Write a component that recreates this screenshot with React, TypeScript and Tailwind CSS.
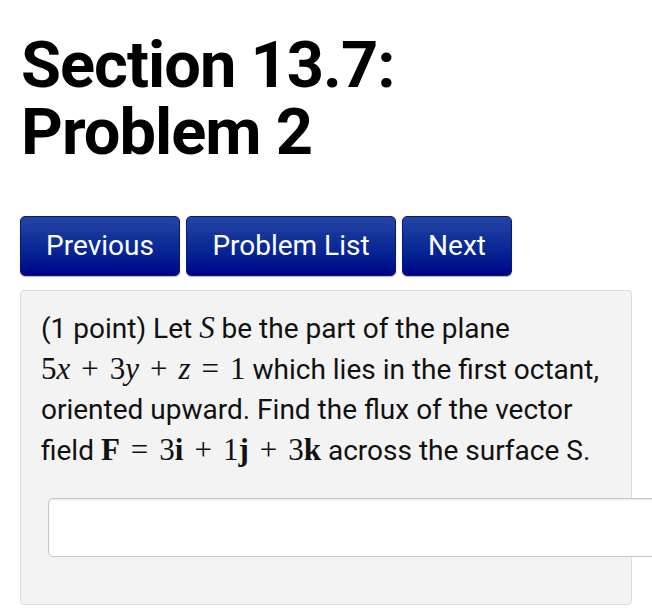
import React from 'react';

const btn =
  'h-[60px] rounded-[5px] border border-[#0b1a6b] bg-gradient-to-b from-[#2444a4] to-[#000088] text-white text-[28px] leading-none shadow-[0_1px_1px_rgba(0,0,0,0.3)]';

function M({ children }: { children: React.ReactNode }) {
  return <span className="font-['Liberation_Serif','DejaVu_Serif',serif] text-[31px]">{children}</span>;
}

function Op({ children }: { children: React.ReactNode }) {
  return <span className="mx-[11px]">{children}</span>;
}

export default function App() {
  return (
    <div className="min-h-[613px] bg-white font-['Roboto',sans-serif] text-black overflow-hidden">
      <h1 className="pl-[21px] pt-[32px] text-[65px] font-bold leading-[67px] tracking-[-1px]">
        Section 13.7:
        <br />
        Problem 2
      </h1>

      <div className="flex gap-[6px] pl-[20px] mt-[50px]">
        <button className={`${btn} w-[160px]`}>Previous</button>
        <button className={`${btn} w-[210px]`}>Problem List</button>
        <button className={`${btn} w-[110px]`}>Next</button>
      </div>

      <div className="ml-[20px] mt-[14px] w-[612px] h-[315px] rounded-[4px] border border-[#dcdcdc] bg-[#f3f3f3] pl-[20px] pt-[17px]">
        <p className="text-[28px] leading-[40px] text-[#111] pr-[6px]">
          (1 point) Let <M><i>S</i></M> be the part of the plane{' '}
          <M>
            5<i>x</i>
            <Op>+</Op>3<i>y</i>
            <Op>+</Op>
            <i>z</i>
            <Op>=</Op>1
          </M>{' '}
          which lies in the first octant, oriented upward. Find the flux of the vector field{' '}
          <M>
            <b>F</b>
            <Op>=</Op>3<b>i</b>
            <Op>+</Op>1<b>j</b>
            <Op>+</Op>3<b>k</b>
          </M>{' '}
          across the surface S.
        </p>
        <div className="mt-[27px] ml-[7px] -mr-[40px] h-[59px] rounded-[5px] border border-[#c8c8c8] bg-white shadow-[inset_0_1px_2px_rgba(0,0,0,0.1)]" />
      </div>
    </div>
  );
}
